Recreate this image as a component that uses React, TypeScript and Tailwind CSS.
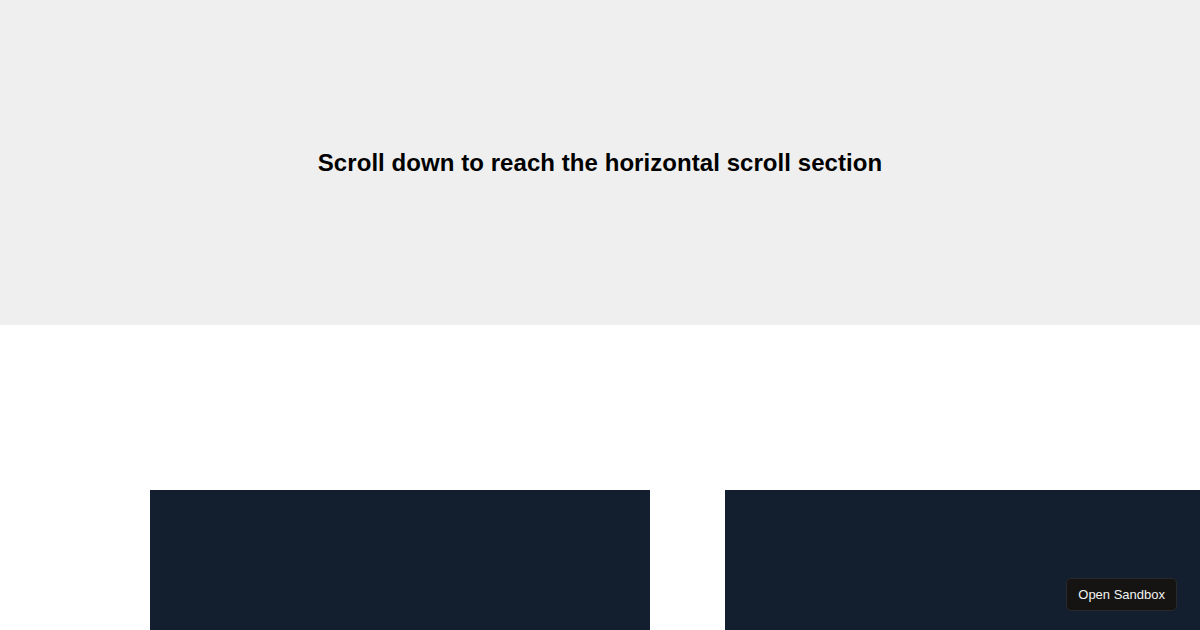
export default function App() {
  const cards = [0, 1, 2];
  return (
    <div className="min-h-screen bg-white" style={{ fontFamily: '"Liberation Sans", Arial, sans-serif' }}>
      <section className="flex h-[325px] items-center justify-center bg-[#efefef]">
        <h1 className="text-[24px] font-bold tracking-[0.06px] text-black">
          Scroll down to reach the horizontal scroll section
        </h1>
      </section>
      <section className="overflow-hidden pt-[165px]">
        <div className="flex gap-[75px] pl-[150px]">
          {cards.map((i) => (
            <div key={i} className="h-[400px] w-[500px] shrink-0 bg-[#131f2f]" />
          ))}
        </div>
      </section>
      <button
        type="button"
        className="fixed bottom-[19px] right-[23px] h-[33px] rounded-[5px] border border-[#2a2a2a] bg-[#151413] px-[11px] text-[13px] text-[#f2f2f2]"
      >
        Open Sandbox
      </button>
    </div>
  );
}
